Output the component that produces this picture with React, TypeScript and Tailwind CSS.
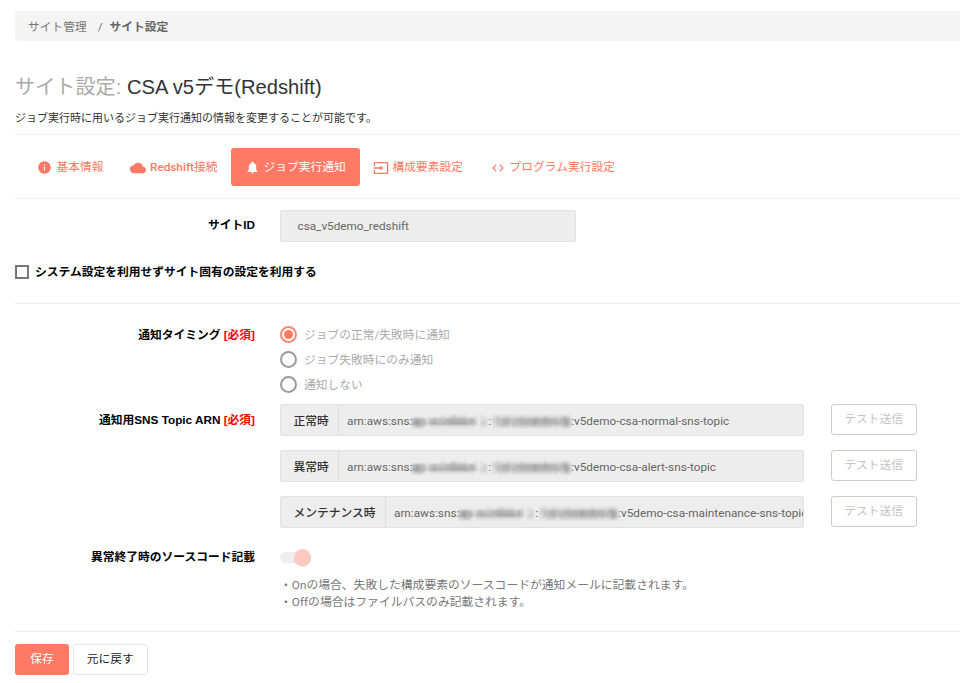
import { useState } from 'react';
import { MdCloud, MdCode, MdInfo, MdInput, MdNotifications } from 'react-icons/md';

const SANS = "font-['Roboto','Noto_Sans_CJK_JP',sans-serif]";
const HELV = "font-['Liberation_Sans','Noto_Sans_CJK_JP',sans-serif]";

const TABS = [
  { id: 'basic', latin: '', label: '基本情報', Icon: MdInfo, box: 'w-[93px] pl-[22px]', icon: 'size-[15px]', gap: 'gap-[4.5px]' },
  { id: 'redshift', latin: 'Redshift', label: '接続', Icon: MdCloud, box: 'w-[123px] pl-[22px]', icon: 'size-[16px]', gap: 'gap-[4px]' },
  { id: 'notify', latin: '', label: 'ジョブ実行通知', Icon: MdNotifications, box: 'w-[128.5px] pl-[13.5px]', icon: 'size-[15px]', gap: 'gap-[4px]' },
  { id: 'parts', latin: '', label: '構成要素設定', Icon: MdInput, box: 'w-[117px] pl-[13px]', icon: 'size-[16px]', gap: 'gap-[4px]' },
  { id: 'program', latin: '', label: 'プログラム実行設定', Icon: MdCode, box: 'w-[150px] pl-[14px]', icon: 'size-[14px]', gap: 'gap-[5px]' },
];

const TIMINGS = ['ジョブの正常/失敗時に通知', 'ジョブ失敗時にのみ通知', '通知しない'];

const TOPICS = [
  { name: '正常時', box: 'w-[58px]', suffix: ':v5demo-csa-normal-sns-topic' },
  { name: '異常時', box: 'w-[58px]', suffix: ':v5demo-csa-alert-sns-topic' },
  { name: 'メンテナンス時', box: 'w-[105px]', suffix: ':v5demo-csa-maintenance-sns-topic' },
];

// darkness (0-9) of each mosaic cell, one string per line
const REGION_MASK = [
  '0000000011022111001010',
  '4543134333444444342012',
  '5644245444455555443022',
  '2331011111111111110011',
];
const ACCOUNT_MASK = [
  '12112111211111121111221',
  '23344334444454454443453',
  '13344343444454444444354',
  '11222122222222222121232',
];

function Mosaic({ mask, width }: { mask: string[]; width: string }) {
  return (
    <span className={`inline-flex flex-col shrink-0 blur-[0.9px] ${width}`}>
      {mask.map((line, y) => (
        <span key={y} className="flex h-[3.3px]">
          {line.split('').map((v, x) => (
            <span key={x} className="flex-1 bg-[#666666]" style={{ opacity: Number(v) * 0.105 }} />
          ))}
        </span>
      ))}
    </span>
  );
}

function Label({ children, required }: { children: string; required?: boolean }) {
  return (
    <div className={`w-[240px] shrink-0 text-right font-bold text-black leading-[18px] ${HELV}`}>
      {children}
      {required && <span className="text-[#ff0000]"> [必須]</span>}
    </div>
  );
}

export default function App() {
  const [tab, setTab] = useState('notify');
  const [timing, setTiming] = useState(0);
  const [custom, setCustom] = useState(false);

  return (
    <div className={`h-[683px] w-full overflow-hidden bg-white pl-[15px] pt-[11px] text-[11.75px] text-[#666666] ${SANS}`}>
      <nav className="flex h-[30px] items-center rounded-l-[3px] bg-[#f4f4f4] pl-[13px] pt-[3px] text-[#777777]">
        <span>サイト管理</span>
        <span className="ml-[11px] mr-[7px]">/</span>
        <span className="font-bold text-[#666666]">サイト設定</span>
      </nav>

      <h1 className={`mt-[32px] h-[28px] whitespace-pre text-[20.15px] leading-[28px] text-[#333333] ${HELV}`}>
        <span className="text-[#aaaaaa]">サイト設定: </span>
        CSA v5デモ(Redshift)
      </h1>
      <p className="mt-[9px] h-[18px] text-[11px] leading-[18px] text-[#333333]">
        ジョブ実行時に用いるジョブ実行通知の情報を変更することが可能です。
      </p>

      <div className="mt-[6px] flex h-[65px] items-center border-y border-[#eeeeee]">
        {TABS.map(({ id, latin, label, Icon, box, icon, gap }) => (
          <button
            key={id}
            onClick={() => setTab(id)}
            className={`flex h-[38px] shrink-0 items-center whitespace-nowrap rounded-[3px] ${box} ${gap} ${
              tab === id ? 'bg-[#ff7964] text-white' : 'text-[#ff7964]'
            }`}
          >
            <Icon className={`mt-[2px] ${icon}`} />
            <span className="pt-[2px]">
              {latin && <span className="font-medium">{latin}</span>}
              {label}
            </span>
          </button>
        ))}
      </div>

      <div className="mt-[11px] flex h-[32px]">
        <div className="pt-[6px]">
          <Label>サイトID</Label>
        </div>
        <div className="ml-[25px] flex w-[296px] items-center rounded-[2px] border border-[#e2e2e2] bg-[#ededed] pl-[16.5px] pt-[2px]">
          csa_v5demo_redshift
        </div>
      </div>

      <div className="mt-[21px] flex h-[18px] items-center gap-[6px]">
        <button
          aria-label="サイト固有の設定"
          onClick={() => setCustom(!custom)}
          className={`size-[14px] border-2 border-[#777777] ${custom ? 'bg-[#ff7964]' : 'bg-white'}`}
        />
        <span className={`font-bold text-black ${HELV}`}>
          システム設定を利用せずサイト固有の設定を利用する
        </span>
      </div>

      <hr className="mt-[22px] border-[#eeeeee]" />

      <div className="mt-[18px] flex h-[82px]">
        <div className="pt-[4px]">
          <Label required>通知タイミング</Label>
        </div>
        <div className="ml-[25px]">
          {TIMINGS.map((t, i) => (
            <button key={t} onClick={() => setTiming(i)} className="flex h-[25.2px] items-center gap-[7px] text-[#aaaaaa]">
              <span
                className={`flex size-[17px] items-center justify-center rounded-full border-2 ${
                  timing === i ? 'border-[#ff8672]' : 'border-[#9b9b9b]'
                }`}
              >
                {timing === i && <span className="size-[9px] rounded-full bg-[#ff7964]" />}
              </span>
              <span className="pt-[2px]">{t}</span>
            </button>
          ))}
        </div>
      </div>

      <div className="flex h-[138px]">
        <div className="pt-[7px]">
          <Label required>通知用SNS Topic ARN</Label>
        </div>
        <div className="ml-[25px] flex flex-col gap-[14px]">
          {TOPICS.map(({ name, box, suffix }) => (
            <div key={name} className="flex h-[32px]">
              <div className="flex w-[523.5px] overflow-hidden rounded-[2px] border border-[#e2e2e2] bg-[#ededed]">
                <span className={`flex shrink-0 items-center border-r border-[#dddddd] pl-[12.5px] pt-[3px] font-medium text-[#333333] ${box}`}>
                  {name}
                </span>
                <span className="flex min-w-0 items-center overflow-hidden whitespace-nowrap pl-[8px] pt-[3px]">
                  arn:aws:sns:
                  <Mosaic mask={REGION_MASK} width="w-[75px]" />
                  <span className="px-[1px]">:</span>
                  <Mosaic mask={ACCOUNT_MASK} width="w-[79px]" />
                  {suffix}
                </span>
              </div>
              <button className="ml-[27px] h-[31px] w-[86.5px] rounded-[3px] border border-[#cccccc] bg-white pt-px text-[#c4c4c4]">
                テスト送信
              </button>
            </div>
          ))}
        </div>
      </div>

      <div className="mt-[5px] flex h-[84px]">
        <div className="pt-px">
          <Label>異常終了時のソースコード記載</Label>
        </div>
        <div className="ml-[25px]">
          <div className="flex h-[21px] items-center">
            <span className="flex h-[11px] w-[29px] items-center justify-end rounded-full bg-[#eeeeee]">
              <span className="-mr-[2px] size-[17px] shrink-0 rounded-full bg-[#ffc9c1] shadow-[0_1px_1px_rgba(0,0,0,0.12)]" />
            </span>
          </div>
          <div className="mt-[9px] text-[11.8px] leading-[17px] text-[#777777]">
            <p>・Onの場合、失敗した構成要素のソースコードが通知メールに記載されます。</p>
            <p>・Offの場合はファイルパスのみ記載されます。</p>
          </div>
        </div>
      </div>

      <hr className="border-[#eeeeee]" />

      <div className="mt-[12px] flex gap-[4px]">
        <button className="h-[31px] w-[54px] rounded-[3px] bg-[#ff7964] pt-px text-white">保存</button>
        <button className="h-[31px] w-[74.5px] rounded-[3px] border border-[#e6e6e6] bg-white pt-px text-[#222222]">元に戻す</button>
      </div>
    </div>
  );
}
